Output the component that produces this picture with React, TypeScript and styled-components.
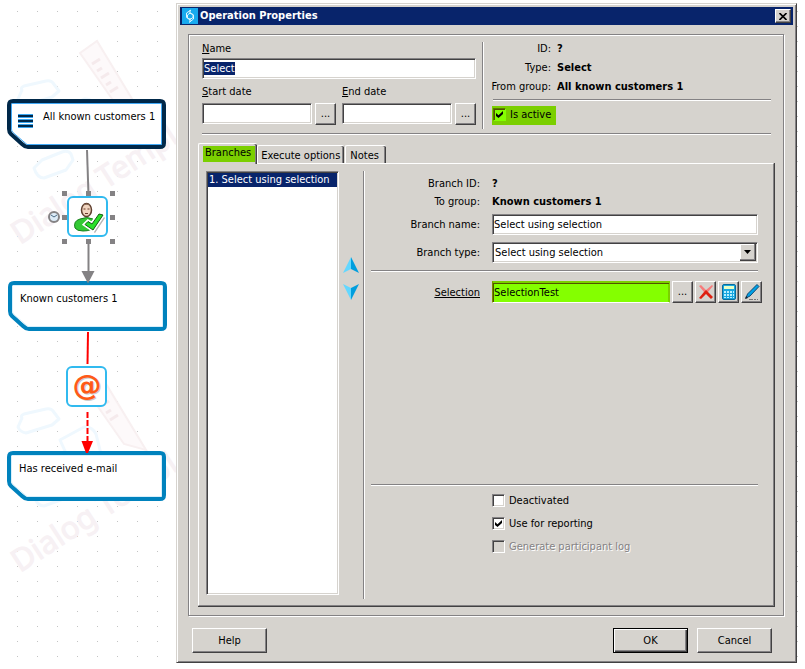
import React, { useEffect, useRef } from "react";
import styled, { createGlobalStyle, css } from "styled-components";

const face = "#d6d3ce";
const navy = "#08246b";
const shade = "#848284";
const dark = "#424142";

const GlobalStyle = createGlobalStyle`
  * { box-sizing: border-box; }
  body { margin: 0; background: #fff; }
  body, button, input, select {
    font-family: "DejaVu Sans Condensed", "DejaVu Sans", sans-serif;
    font-stretch: condensed;
    font-size: 11px;
    line-height: 14px;
    color: #000;
  }
`;

const sunken = css`
  border: 1px solid;
  border-color: ${shade} #fff #fff ${shade};
  box-shadow: inset 1px 1px 0 ${dark}, inset -1px -1px 0 ${face};
`;

const raised = css`
  border: 1px solid;
  border-color: #fff ${dark} ${dark} #fff;
  box-shadow: inset -1px -1px 0 ${shade};
`;

const Page = styled.main`
  display: grid;
  grid-template-columns: 176px 1fr;
  min-height: 100vh;
  padding: 3px 8px 6px 0;
  background-color: #fff;
  background-image: conic-gradient(from 0deg at 1px 1px, transparent 270deg, #c4c4c4 270deg);
  background-size: 20px 15px;
  background-position: 17px 11px;
`;

const Canvas = styled.section`
  position: relative;
  overflow: hidden;
  margin-top: -3px;
`;

const Layer = styled.svg`
  position: absolute;
  left: 0;
  top: 0;
`;

const Node = styled.div<{ $x: number; $y: number }>`
  position: absolute;
  left: ${(p) => p.$x}px;
  top: ${(p) => p.$y}px;
  width: 159px;
  height: 50px;
  svg { position: absolute; left: 0; top: 0; }
`;

const NodeLabel = styled.span<{ $indent?: boolean }>`
  position: relative;
  display: block;
  padding: 11px 0 0 ${(p) => (p.$indent ? 36 : 12)}px;
  white-space: nowrap;
`;

const OpNode = styled.div<{ $x: number; $y: number }>`
  position: absolute;
  left: ${(p) => p.$x}px;
  top: ${(p) => p.$y}px;
  width: 41px;
  height: 41px;
  border: 2px solid #31baef;
  border-radius: 6px;
  background: #fff;
  svg { display: block; }
`;

const Dialog = styled.form`
  display: flex;
  flex-direction: column;
  background: ${face};
  border: 1px solid;
  border-color: ${face} ${dark} ${dark} ${face};
  box-shadow: inset 1px 1px 0 #fff, inset -1px -1px 0 ${shade};
  padding: 3px;
`;

const TitleBar = styled.header`
  display: flex;
  align-items: center;
  height: 18px;
  padding: 0 2px 0 2px;
  gap: 2px;
  background: ${navy};
  color: #fff;
`;

const Title = styled.h1`
  flex: 1;
  margin: 0;
  font-size: 11px;
  line-height: 18px;
`;

const CloseButton = styled.button`
  ${raised}
  width: 16px;
  height: 14px;
  padding: 0;
  background: ${face};
  display: grid;
  place-items: center;
`;

const Frame = styled.div`
  flex: 1;
  display: flex;
  flex-direction: column;
  margin: 9px 9px 0 8px;
  border: 1px solid ${shade};
  box-shadow: 1px 1px 0 #fff, inset 1px 1px 0 #fff;
  padding: 7px 8px 8px 9px;
`;

const Summary = styled.div`
  display: grid;
  grid-template-columns: 274px 2px 1fr;
  column-gap: 6px;
  height: 87px;
  margin: 0 4px;
`;

const VLine = styled.div`
  width: 2px;
  border-left: 1px solid ${shade};
  border-right: 1px solid #fff;
`;

const HLine = styled.hr<{ $margin: string }>`
  width: auto;
  height: 2px;
  border: 0;
  border-top: 1px solid ${shade};
  border-bottom: 1px solid #fff;
  margin: ${(p) => p.$margin};
`;

const Field = styled.div<{ $gap: number }>`
  display: flex;
  flex-direction: column;
  gap: ${(p) => p.$gap}px;
  min-width: 0;
`;

const FieldLabel = styled.label`
  white-space: nowrap;
`;

const TextInput = styled.input<{ $marked?: boolean }>`
  ${sunken}
  width: 100%;
  min-width: 0;
  height: 21px;
  padding: 0 1px;
  border-radius: 0;
  background: #fff;
  outline: 0;
  &::selection { background: ${navy}; color: #fff; }
  ${(p) =>
    p.$marked &&
    css`
      height: 22px;
      background: #84ff00;
      border-color: #7bcf00 #7bcf00 #fff #7b8a00;
      box-shadow: inset 0 1px 0 #7bcf00, inset 1px 2px 0 #525100, inset -1px 0 0 #7bcf00;
    `}
`;

const DateRow = styled.div`
  display: grid;
  grid-template-columns: 1fr 1fr;
  column-gap: 6px;
  margin-top: 6px;
`;

const WithButton = styled.div`
  display: flex;
  gap: 3px;
`;

const SmallButton = styled.button`
  ${raised}
  flex: none;
  display: grid;
  place-items: center;
  width: 21px;
  height: 22px;
  padding: 0;
  background: ${face};
`;

const Facts = styled.dl<{ $label: number; $gap: number; $rowGap: number }>`
  display: grid;
  grid-template-columns: ${(p) => p.$label}px 1fr;
  column-gap: ${(p) => p.$gap}px;
  row-gap: ${(p) => p.$rowGap}px;
  margin: 0;
  white-space: nowrap;
  dt { text-align: right; }
  dd { margin: 0; font-weight: bold; }
`;

const CheckRow = styled.label<{ $marked?: boolean; $off?: boolean }>`
  display: flex;
  align-items: center;
  gap: 4px;
  width: max-content;
  height: 13px;
  ${(p) =>
    p.$marked &&
    css`
      height: 19px;
      margin-left: 2px;
      padding: 0 5px 2px 1px;
      background: #7bcf00;
      input { background: #84ff00; border-color: #5a7900 #84ff00 #84ff00 #5a7900; box-shadow: inset 1px 1px 0 #525100; }
    `}
  ${(p) =>
    p.$off &&
    css`
      color: ${shade};
      text-shadow: 1px 1px 0 #fff;
      input { background: ${face}; }
    `}
`;

const CheckBox = styled.input`
  ${sunken}
  appearance: none;
  width: 13px;
  height: 13px;
  margin: 0;
  background: #fff;
  &:checked::after {
    content: "";
    display: block;
    width: 7px;
    height: 7px;
    margin: 2px;
    background: #000;
    clip-path: polygon(0 28%, 36% 60%, 100% 0, 100% 43%, 36% 100%, 0 70%);
  }
`;

const Tabs = styled.div`
  display: flex;
  align-items: flex-end;
  padding-right: 4px;
`;

const Tab = styled.button<{ $current?: boolean }>`
  height: 18px;
  margin-right: 1px;
  padding: 2px 4px 0 3px;
  background: ${face};
  border: solid #fff;
  border-width: 1px 0 0 1px;
  border-radius: 2px 2px 0 0;
  box-shadow: inset -1px 0 0 ${dark}, inset -2px 0 0 ${shade};
  white-space: nowrap;
  &:last-child { padding: 2px 7px 0 4px; }
  ${(p) =>
    p.$current &&
    css`
      position: relative;
      height: 21px;
      margin: 0 0 -1px;
      padding: 2px 2px 2px 4px;
      span { display: block; height: 16px; padding: 0 4px 0 2px; background: #7bcf00; }
    `}
`;

const PanelShell = styled.div`
  flex: 1;
  display: flex;
  border: solid ${dark};
  border-width: 0 1px 1px 0;
`;

const Panel = styled.div`
  flex: 1;
  display: grid;
  grid-template-columns: 133px 24px 2px 1fr;
  border: 1px solid;
  border-color: #fff ${shade} ${shade} #fff;
  padding: 7px 15px 6px 7px;
`;

const List = styled.ul`
  ${sunken}
  list-style: none;
  margin: 0 0 4px;
  padding: 1px;
  background: #fff;
`;

const ListItem = styled.li`
  height: 14px;
  padding-left: 1px;
  background: ${navy};
  color: #fff;
  white-space: nowrap;
`;

const Movers = styled.div`
  display: flex;
  flex-direction: column;
  align-items: center;
  gap: 11px;
  padding-top: 86px;
`;

const MoveButton = styled.button`
  padding: 0;
  border: 0;
  background: none;
  height: 16px;
  svg { display: block; }
`;

const Details = styled.div`
  display: flex;
  flex-direction: column;
  min-width: 0;
  padding: 6px 0 46px 6px;
`;

const FormRow = styled.div<{ $top: number; $wide?: boolean }>`
  display: grid;
  grid-template-columns: 109px 1fr;
  column-gap: 12px;
  align-items: center;
  margin: ${(p) => p.$top}px ${(p) => (p.$wide ? -4 : 0)}px 0 0;
  & > label, & > a { text-align: right; }
`;

const ToolRow = styled.div`
  display: flex;
  gap: 2px;
  min-width: 0;
`;

const SelectionLink = styled.a`
  padding-top: 2px;
  color: #000;
`;

const SelectBox = styled.div`
  position: relative;
  svg { position: absolute; right: 2px; top: 2px; pointer-events: none; }
`;

const Select = styled.select`
  ${sunken}
  appearance: none;
  width: 100%;
  height: 21px;
  padding: 0 18px 0 2px;
  border-radius: 0;
  background: #fff;
  display: block;
`;

const Spacer = styled.div`
  flex: 1;
`;

const Checks = styled.div`
  display: flex;
  flex-direction: column;
  gap: 10px;
  margin-left: 121px;
`;

const Footer = styled.footer`
  display: flex;
  gap: 9px;
  padding: 12px 21px 6px 12px;
`;

const PushButton = styled.button<{ $primary?: boolean }>`
  ${raised}
  width: 75px;
  height: 25px;
  padding: 0;
  background: ${face};
  ${(p) =>
    p.$primary &&
    css`
      margin-left: auto;
      border-color: #000;
      box-shadow: inset 1px 1px 0 #fff, inset -1px -1px 0 ${dark}, inset -2px -2px 0 ${shade};
    `}
`;

const Watermark = ({ y }: { y: number }) => (
  <g transform={`translate(0 ${y})`}>
    <text
      transform="translate(20 245) rotate(-33)"
      fontFamily="Noto Sans, sans-serif"
      fontSize="31"
      fill="#f7f1f4"
      stroke="#f7f1f4"
    >
      Dialog Templ
    </text>
    <path d="M80 53L97 41L146 122L124 116Z" fill="#fdf9fa" stroke="#f8f0f1" strokeWidth="2" />
    <path d="M92 64l8-5M97 71l5-3M101 78l8-5M106 85l5-3M110 92l8-5" stroke="#f5eaec" strokeWidth="3" />
    <g fill="#fff" stroke="#eff8fe" strokeWidth="3" strokeLinejoin="round">
      <path d="M22 90Q20 88 24 86L46 81Q51 80 53 83L59 91L52 97L26 105Q20 104 18 99Z" />
      <path d="M34 168L42 160L62 152Q68 150 71 154L73 160L66 170L44 178Q37 178 34 168Z" />
      <path d="M60 112L84 99Q92 98 96 106L101 126L92 138L70 134Z" />
    </g>
  </g>
);

const GroupShape = ({ color, inner }: { color: string; inner: string }) => (
  <svg width="159" height="50" aria-hidden="true">
    <path
      d="M6 2H153Q157 2 157 6V44Q157 48 153 48H21Q18 48 15 45L4 35Q2 33 2 30V6Q2 2 6 2Z"
      fill="#fff"
      stroke={color}
      strokeWidth="4"
    />
    <path d="M5 4.500H154Q154.500 4.500 154.500 6V45.500H20L6 33.500Q4.500 32 4.500 30V5Z" fill="none" stroke={inner} />
  </svg>
);

const PersonIcon = () => (
  <svg width="37" height="37" aria-hidden="true">
    <path d="M6 30Q4 23 11 21Q18 18 24 21L26 28Q23 33 14 33Q8 33 6 30Z" fill="#34c934" stroke="#16801c" />
    <ellipse cx="17.500" cy="12" rx="5" ry="6.500" fill="#f1d5c0" stroke="#604030" strokeWidth="1.500" />
    <path d="M13 8Q17.500 3 22 8Q17.500 5.500 13 8Z" fill="#8a6a55" />
    <path d="M14.500 11h2M18.500 11h2M16 15.500h3" stroke="#6b3b2a" />
    <path d="M18 29L22 26L25 28L34 18L36 20L26 35Z" fill="#b5b5b5" />
    <path d="M16 26.500L19 23.500L23 26L30 16L34 17L24 32Z" fill="#fff" stroke="#fff" strokeWidth="4" />
    <path d="M16 26.500L19 23.500L23 26L30 16L34 17L24 32Z" fill="#28e128" stroke="#145c14" />
  </svg>
);

const AtIcon = () => (
  <svg width="37" height="37" aria-hidden="true">
    <g fontFamily="DejaVu Sans, sans-serif" fontStretch="normal" fontSize="29" fontWeight="bold" textAnchor="middle">
      <text x="20" y="28" fill="#ccc">@</text>
      <text x="19" y="27" fill="#ff5a18">@</text>
    </g>
  </svg>
);

const Diagram = () => (
  <Canvas aria-label="Diagram">
    <Layer width="176" height="663" aria-hidden="true">
      <Watermark y={0} />
      <Watermark y={328} />
      <g stroke="#848284" strokeWidth="2">
        <path d="M87 150L88.500 195" />
        <path d="M88.500 240V272" />
      </g>
      <path d="M88 332L87.500 364" stroke="#f00" strokeWidth="2" />
      <path d="M87.500 412V441" stroke="#f00" strokeWidth="2" strokeDasharray="6 2" />
    </Layer>
    <Node $x={7} $y={99}>
      <GroupShape color="#002849" inner="#42aaf7" />
      <svg width="40" height="40" aria-hidden="true">
        <path d="M11 17h15M11 22h15M11 27h15" stroke="#39a6f0" strokeWidth="4" />
        <path d="M11 17h15M11 22h15M11 27h15" stroke="#002849" strokeWidth="2" />
      </svg>
      <NodeLabel $indent>All known customers 1</NodeLabel>
    </Node>
    <Node $x={8} $y={281}>
      <GroupShape color="#0082bd" inner="#d8effb" />
      <NodeLabel>Known customers 1</NodeLabel>
    </Node>
    <Node $x={7} $y={451}>
      <GroupShape color="#0082bd" inner="#d8effb" />
      <NodeLabel>Has received e-mail</NodeLabel>
    </Node>
    <OpNode $x={67} $y={196}><PersonIcon /></OpNode>
    <OpNode $x={66} $y={366}><AtIcon /></OpNode>
    <Layer width="176" height="460" aria-hidden="true">
      <path d="M81.500 271H94.500L88 283.500Z" fill="#848284" />
      <path d="M81.500 441H93L88 453H86Z" fill="#f00" />
      {[62, 86, 110].flatMap((x) =>
        [191, 215, 239]
          .filter((y) => !(x === 86 && y === 215))
          .map((y) => <rect key={`${x}-${y}`} x={x} y={y} width="5" height="5" fill="#848284" />)
      )}
      <circle cx="54" cy="217" r="5" fill="#dcebf7" stroke="#848284" strokeWidth="2" />
      <path d="M51 215l3 2l3-2" fill="none" stroke="#4a6a84" />
    </Layer>
  </Canvas>
);

const Mover = ({ down }: { down?: boolean }) => (
  <MoveButton type="button" aria-label={down ? "Move down" : "Move up"}>
    <svg width="16" height="16">
      <g transform={down ? "matrix(1 0 0 -1 0 16)" : undefined}>
        <path d="M8 0L0 16L8 12Z" fill="#63d7ff" />
        <path d="M8 0L16 16L8 12Z" fill="#009ede" />
      </g>
    </svg>
  </MoveButton>
);

const Check = (p: { text: string; on?: boolean; off?: boolean; marked?: boolean }) => (
  <CheckRow $marked={p.marked} $off={p.off}>
    <CheckBox type="checkbox" defaultChecked={p.on} disabled={p.off} />
    {p.text}
  </CheckRow>
);

const DateField = ({ id, hot, rest }: { id: string; hot: string; rest: string }) => (
  <Field $gap={4}>
    <FieldLabel htmlFor={id}><u>{hot}</u>{rest}</FieldLabel>
    <WithButton>
      <TextInput id={id} />
      <SmallButton type="button" aria-label="Pick date">...</SmallButton>
    </WithButton>
  </Field>
);

export default function App() {
  const nameRef = useRef<HTMLInputElement>(null);
  useEffect(() => {
    nameRef.current?.focus();
    nameRef.current?.select();
  }, []);

  return (
    <>
      <GlobalStyle />
      <Page>
        <Diagram />
        <Dialog role="dialog" aria-labelledby="dialog-title" onSubmit={(e) => e.preventDefault()}>
          <TitleBar>
            <svg width="16" height="16" aria-hidden="true">
              <rect width="16" height="16" fill="#18aaef" />
              <g fill="none" stroke="#dff5ff">
                <path d="M9 2L4.500 5V9.500L8 11.500L11 9.500V6.500L8 5" />
                <path d="M7 14.500L11.500 11V7L8 5L5.500 7V10L8 12" />
                <path d="M8 2V6M8 10V14" />
              </g>
            </svg>
            <Title id="dialog-title">Operation Properties</Title>
            <CloseButton type="button" aria-label="Close">
              <svg width="8" height="7"><path d="M0.500 0L7.500 7M7.500 0L0.500 7" stroke="#000" strokeWidth="1.600" /></svg>
            </CloseButton>
          </TitleBar>

          <Frame>
            <Summary>
              <div>
                <Field $gap={2}>
                  <FieldLabel htmlFor="name"><u>N</u>ame</FieldLabel>
                  <TextInput id="name" ref={nameRef} defaultValue="Select" />
                </Field>
                <DateRow>
                  <DateField id="start" hot="S" rest="tart date" />
                  <DateField id="end" hot="E" rest="nd date" />
                </DateRow>
              </div>
              <VLine />
              <div>
                <Facts $label={61} $gap={6} $rowGap={5}>
                  <dt>ID:</dt><dd>?</dd>
                  <dt>Type:</dt><dd>Select</dd>
                  <dt>From group:</dt><dd>All known customers 1</dd>
                </Facts>
                <HLine $margin="5px 0 5px 3px" />
                <Check text="Is active" on marked />
              </div>
            </Summary>
            <HLine $margin="4px 4px 8px" />

            <Tabs role="tablist">
              <Tab type="button" role="tab" aria-selected="true" $current><span>Branches</span></Tab>
              <Tab type="button" role="tab">Execute options</Tab>
              <Tab type="button" role="tab">Notes</Tab>
            </Tabs>
            <PanelShell>
              <Panel role="tabpanel">
                <List>
                  <ListItem>1. Select using selection</ListItem>
                </List>
                <Movers>
                  <Mover />
                  <Mover down />
                </Movers>
                <VLine />
                <Details>
                  <Facts $label={109} $gap={12} $rowGap={4}>
                    <dt>Branch ID:</dt><dd>?</dd>
                    <dt>To group:</dt><dd>Known customers 1</dd>
                  </Facts>
                  <FormRow $top={5}>
                    <label htmlFor="branch-name">Branch name:</label>
                    <TextInput id="branch-name" defaultValue="Select using selection" />
                  </FormRow>
                  <FormRow $top={7}>
                    <label htmlFor="branch-type">Branch type:</label>
                    <SelectBox>
                      <Select id="branch-type"><option>Select using selection</option></Select>
                      <svg width="16" height="17" aria-hidden="true">
                        <rect width="16" height="17" fill={dark} />
                        <rect width="15" height="16" fill={shade} />
                        <rect width="14" height="15" fill="#fff" />
                        <rect x="1" y="1" width="13" height="14" fill={face} />
                        <path d="M4 6H11L7.500 10Z" fill="#000" />
                      </svg>
                    </SelectBox>
                  </FormRow>
                  <HLine $margin="7px 0 0" />
                  <FormRow $top={9} $wide>
                    <SelectionLink href="#selection">Selection</SelectionLink>
                    <ToolRow>
                      <TextInput $marked id="selection" aria-label="Selection" defaultValue="SelectionTest" />
                      <SmallButton type="button" aria-label="Browse">...</SmallButton>
                      <SmallButton type="button" aria-label="Remove">
                        <svg width="16" height="16">
                          <path d="M1 2L3 1L8 6L14 1L15 2L10 8L8 9L6 8Z" fill="#f77b7b" />
                          <path d="M6 8L8 6L10 8L15 13L13 15L8 10L3 15L1 14Z" fill="#de2010" />
                        </svg>
                      </SmallButton>
                      <SmallButton type="button" aria-label="Calculate">
                        <svg width="14" height="16">
                          <rect x="0.500" y="0.500" width="13" height="15" rx="1.500" fill="#18a6e0" stroke="#086d9c" />
                          <rect x="2" y="2" width="10" height="3" fill="#e7ffc6" />
                          <path d="M2 7h2v2h-2zM5 7h2v2h-2zM8 7h2v2h-2zM11 7h1v2h-1zM2 10h2v2h-2zM5 10h2v2h-2zM8 10h2v2h-2zM11 10h1v2h-1zM2 13h2v1h-2zM5 13h2v1h-2zM8 13h2v1h-2zM11 13h1v1h-1z" fill="#b5efff" />
                        </svg>
                      </SmallButton>
                      <SmallButton type="button" aria-label="Edit">
                        <svg width="16" height="16">
                          <path d="M2 14L3.500 10L13 0.500L15 2.500L6 12Z" fill="#00a2e7" stroke="#104973" />
                          <path d="M1 15L2 12L4 14Z" fill="#102030" />
                          <path d="M5 15.500h4M10 15.500h2M13 15.500h1" stroke="#777" />
                        </svg>
                      </SmallButton>
                    </ToolRow>
                  </FormRow>
                  <Spacer />
                  <HLine $margin="0 0 8px" />
                  <Checks>
                    <Check text="Deactivated" />
                    <Check text="Use for reporting" on />
                    <Check text="Generate participant log" off />
                  </Checks>
                </Details>
              </Panel>
            </PanelShell>
          </Frame>

          <Footer>
            <PushButton type="button">Help</PushButton>
            <PushButton type="submit" $primary>OK</PushButton>
            <PushButton type="button">Cancel</PushButton>
          </Footer>
        </Dialog>
      </Page>
    </>
  );
}
